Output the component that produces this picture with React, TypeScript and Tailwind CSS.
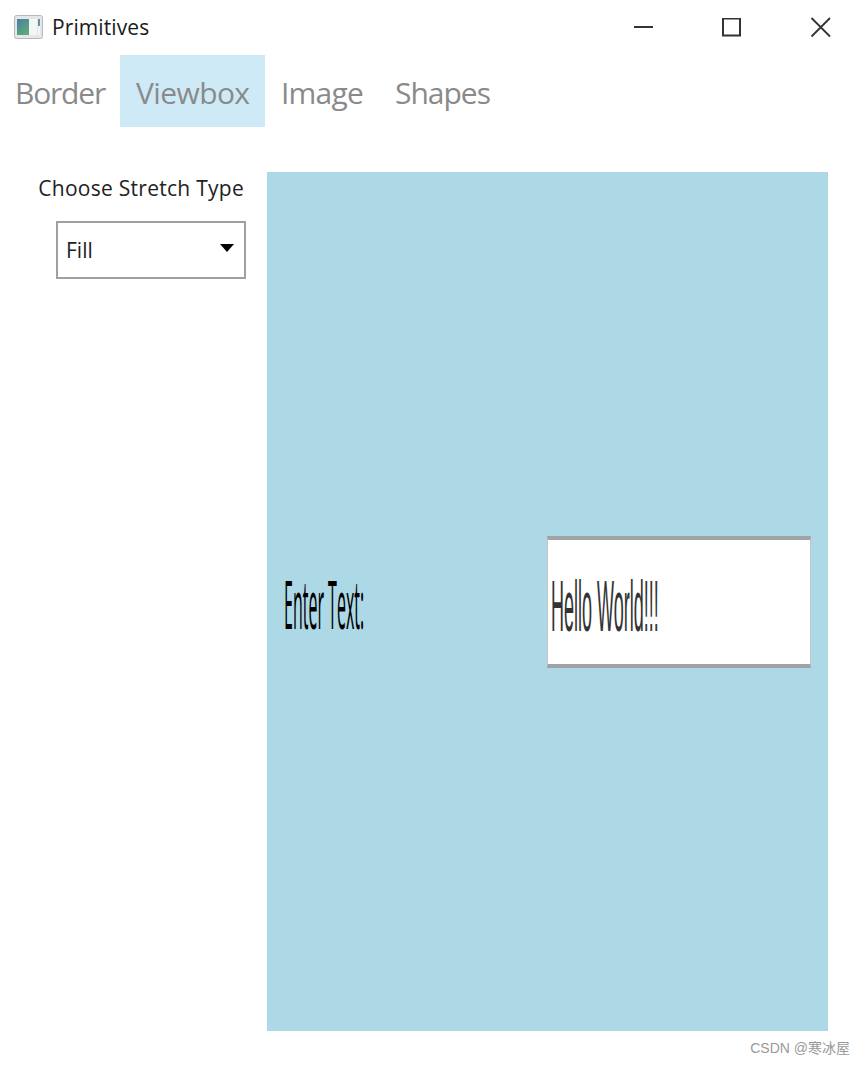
export default function App() {
  const font = 'font-["Open_Sans","Noto_Sans",sans-serif]';
  return (
    <div className={`w-[865px] h-[1066px] bg-white flex flex-col ${font}`}>
      <header className="h-[55px] flex items-center pl-[14px] shrink-0">
        <svg width="29" height="25" viewBox="0 0 29 25" className="shrink-0">
          <defs>
            <linearGradient id="g" x1="0" y1="0" x2="0.6" y2="1">
              <stop offset="0" stopColor="#4a7fa8" />
              <stop offset="1" stopColor="#5fa878" />
            </linearGradient>
          </defs>
          <rect x="0.5" y="0.5" width="28" height="23" rx="2" fill="#e4e6e8" stroke="#b4b9be" />
          <rect x="3" y="4" width="12" height="16" fill="url(#g)" />
          <rect x="15" y="4" width="8" height="16" fill="#f4f5f5" />
          <rect x="24" y="4" width="2" height="7" fill="#5f93a8" />
          <rect x="24" y="11" width="2" height="9" fill="#f4f5f5" />
        </svg>
        <span className="ml-[9px] text-[21px] leading-none tracking-[0.1px] text-[#1b1b1b] -mt-[1px]">Primitives</span>
        <div className="ml-auto flex items-center text-[#333]">
          <svg width="20" height="20" viewBox="0 0 20 20" className="mr-[68px]">
            <path d="M0 9H19" stroke="#333" strokeWidth="2" />
          </svg>
          <svg width="20" height="20" viewBox="0 0 20 20" className="mr-[68px]">
            <rect x="1" y="0.5" width="17" height="17" fill="none" stroke="#333" strokeWidth="2" />
          </svg>
          <svg width="22" height="22" viewBox="0 0 22 22" className="mr-[33px]">
            <path d="M1.5 1L20 19.5M20 1L1.5 19.5" stroke="#333" strokeWidth="1.8" />
          </svg>
        </div>
      </header>
      <nav className="h-[72px] flex text-[30px] text-[#8a8a8a] shrink-0">
        <div className="w-[120px] flex items-center pl-[15px] pt-[2px] tracking-[-1.2px]">Border</div>
        <div className="w-[145px] flex items-center pl-[16px] pt-[2px] bg-[#cfeaf7] tracking-[-0.6px]">Viewbox</div>
        <div className="w-[114px] flex items-center pl-[16px] pt-[2px] tracking-[-0.8px]">Image</div>
        <div className="flex items-center pl-[16px] pt-[2px] tracking-[-1px]">Shapes</div>
      </nav>
      <main className="flex mt-[45px]">
        <aside className="w-[267px] shrink-0 flex flex-col items-end pr-[21px]">
          <div className="text-[21px] leading-[32px] tracking-[0.27px] text-[#222] mr-[2px]">Choose Stretch Type</div>
          <div className="mt-[17px] w-[190px] h-[58px] border-2 border-[#a0a0a0] flex items-center justify-between pl-[8px] pr-[10px]">
            <span className="text-[21px] text-[#222] mt-[2px]">Fill</span>
            <svg width="14" height="8" viewBox="0 0 14 8" className="mb-[4px]">
              <path d="M0 0H14L7 8Z" fill="#000" />
            </svg>
          </div>
        </aside>
        <section className="w-[561px] h-[859px] bg-[#add8e6] flex items-center justify-between px-[17px]">
          <div className="w-[263px] mt-[4px] h-[60px] flex items-center">
            <span className="inline-block whitespace-nowrap origin-left scale-x-[0.5] scale-y-[2.1] text-[32px] leading-none text-black">Enter Text:</span>
          </div>
          <div className="w-[264px] h-[132px] bg-white border-x border-x-[#c4c4c4] border-y-[4px] border-y-[#a0a3a5] flex items-center pl-[3px]">
            <span className="inline-block whitespace-nowrap origin-left scale-x-[0.5] scale-y-[2] mt-[10px] text-[36px] leading-none text-[#333] font-['Liberation_Sans',sans-serif]">Hello World!!!</span>
          </div>
        </section>
      </main>
      <footer className="flex justify-end pr-[15px] pt-[7px] text-[14px] leading-[20px] text-[#9a9a9a] font-['Liberation_Sans','Noto_Sans_CJK_SC',sans-serif]">
        CSDN @寒冰屋
      </footer>
    </div>
  );
}
